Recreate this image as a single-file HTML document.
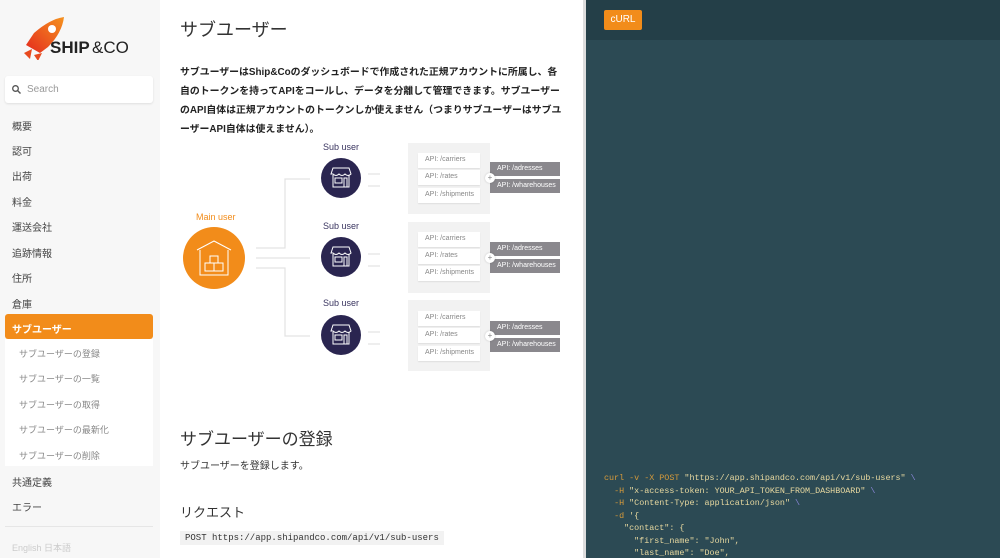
<!DOCTYPE html>
<html><head><meta charset="utf-8"><style>
*{margin:0;padding:0;box-sizing:border-box}
body{width:1000px;height:558px;overflow:hidden;font-family:"Liberation Sans","Noto Sans CJK JP",sans-serif;background:#fff;position:relative}
.side{position:absolute;left:0;top:0;width:160px;height:558px;background:#f7f7f7}
.search{position:absolute;left:5px;top:76px;width:148px;height:27px;background:#fff;border-radius:3px;box-shadow:0 1px 2px rgba(0,0,0,.1);font-size:10px;color:#999;padding:8px 0 0 22px}
.nav{position:absolute;left:12px;font-size:10px;color:#444}
.act{position:absolute;left:5px;top:314px;width:148px;height:25px;background:#f28c1a;border-radius:3px;color:#fff;font-weight:bold;font-size:10px;padding:7px 7px}
.subs{position:absolute;left:5px;top:339px;width:148px;height:127px;background:#fff}
.subs div{position:absolute;left:14px;font-size:9px;color:#888}
.main{position:absolute;left:180px}
.right{position:absolute;left:583px;top:0;width:417px;height:558px;background:#2c4a54;border-left:3px solid #ddd}
.rtop{position:absolute;left:0;top:0;width:417px;height:40px;background:#243f48}
.curl{position:absolute;left:18px;top:10px;width:38px;height:20px;background:#f28c1a;border-radius:2px;color:#fff;font-size:10px;text-align:center;line-height:20px}
pre{position:absolute;left:18px;top:472px;font-family:"Liberation Mono",monospace;font-size:8.4px;line-height:12.5px;color:#e8d9a0}
.o{color:#d69a3a}.b{color:#8a86d8}
.gb{position:absolute;left:408px;width:82px;height:71px;background:#f2f2f2}
.api{position:absolute;left:418px;width:62px;height:15px;background:#fff;font-size:7px;color:#888;padding:3px 0 0 7px;box-shadow:0 1px 1px rgba(0,0,0,.08)}
.dk{position:absolute;left:490px;width:70px;height:14px;background:#8a888d;font-size:7px;color:#fff;padding:3px 0 0 7px}
.pl{position:absolute;left:485px;width:10px;height:10px;border-radius:50%;background:#fff;font-size:8px;color:#888;text-align:center;line-height:10px;box-shadow:0 0 2px rgba(0,0,0,.2)}
.su{position:absolute;left:321px;width:40px;height:40px;border-radius:50%;background:#2a2550}
.sl{position:absolute;left:323px;font-size:9px;color:#3a3560}
</style></head><body>
<div class="side">
<svg style="position:absolute;left:20px;top:15px" width="120" height="45" viewBox="0 0 120 45">
<defs><linearGradient id="g" x1="0" y1="1" x2="1" y2="0"><stop offset="0" stop-color="#e42a1e"/><stop offset="1" stop-color="#f5921e"/></linearGradient></defs>
<path d="M6 30 L14 18 Q30 4 44 2 Q42 18 28 32 L20 38 Z" fill="url(#g)"/>
<circle cx="32" cy="14" r="4" fill="#fff"/>
<path d="M4 38 L12 34 L10 44 Z M14 40 L22 38 L18 46Z" fill="#e84a1e"/>
<text x="30" y="38" font-family="Liberation Sans" font-weight="bold" font-size="17" fill="#222">SHIP</text>
<text x="72" y="38" font-family="Liberation Sans" font-size="17" fill="#222">&amp;CO</text>
</svg>
<div class="search"><svg style="position:absolute;left:7px;top:9px" width="9" height="9"><circle cx="3.5" cy="3.5" r="2.8" fill="none" stroke="#555" stroke-width="1.3"/><path d="M5.5 5.5L8.5 8.5" stroke="#555" stroke-width="1.4"/></svg>Search</div>
<div class="nav" style="top:118px">概要</div>
<div class="nav" style="top:143px">認可</div>
<div class="nav" style="top:168px">出荷</div>
<div class="nav" style="top:194px">料金</div>
<div class="nav" style="top:219px">運送会社</div>
<div class="nav" style="top:245px">追跡情報</div>
<div class="nav" style="top:270px">住所</div>
<div class="nav" style="top:296px">倉庫</div>
<div class="act">サブユーザー</div>
<div class="subs">
<div style="top:8px">サブユーザーの登録</div>
<div style="top:33px">サブユーザーの一覧</div>
<div style="top:59px">サブユーザーの取得</div>
<div style="top:84px">サブユーザーの最新化</div>
<div style="top:110px">サブユーザーの削除</div>
</div>
<div class="nav" style="top:474px">共通定義</div>
<div class="nav" style="top:499px">エラー</div>
<div style="position:absolute;left:5px;top:526px;width:148px;border-top:1px solid #e6e6e6"></div>
<div class="nav" style="top:541px;color:#ccc;font-size:9px">English 日本語</div>
</div>

<div class="main" style="top:16px;font-size:18px;color:#333">サブユーザー</div>
<div class="main" style="top:63px;width:386px;font-size:9.9px;line-height:19px;font-weight:bold;color:#222">サブユーザーはShip&amp;Coのダッシュボードで作成された正規アカウントに所属し、各自のトークンを持ってAPIをコールし、データを分離して管理できます。サブユーザーのAPI自体は正規アカウントのトークンしか使えません（つまりサブユーザーはサブユーザーAPI自体は使えません）。</div>

<div style="position:absolute;left:196px;top:212px;font-size:9px;color:#f28c1a">Main user</div>
<div style="position:absolute;left:183px;top:227px;width:62px;height:62px;border-radius:50%;background:#f28c1a"></div>
<svg style="position:absolute;left:195px;top:238px" width="38" height="40" fill="none" stroke="#fff" stroke-width="1"><path d="M2 12 L19 3 L36 12 M5 12 V37 H33 V12"/><rect x="15" y="18" width="8" height="7"/><rect x="10" y="25" width="9" height="8"/><rect x="19" y="25" width="9" height="8"/></svg>
<svg style="position:absolute;left:250px;top:170px" width="160" height="180" fill="none" stroke="#e3e3e3" stroke-width="1.2">
<path d="M6 78 H35 V9 H60 M6 88 H60 M6 98 H35 V166 H60 M118 4 H130 M118 16 H130 M118 84 H130 M118 96 H130 M118 162 H130 M118 174 H130"/>
</svg>
<div class="sl" style="top:142px">Sub user</div>
<div class="sl" style="top:221px">Sub user</div>
<div class="sl" style="top:298px">Sub user</div>
<div class="su" style="top:158px"></div><div class="su" style="top:237px"></div><div class="su" style="top:315px"></div>
<svg style="position:absolute;left:329px;top:166px" width="24" height="24" fill="none" stroke="#fff" stroke-width="1"><path d="M2 8 L4 2 H20 L22 8 Q19 11 16 8 Q13 11 10 8 Q7 11 4 8 Z M4 9 V21 H20 V9"/><rect x="6" y="12" width="7" height="5"/><rect x="15" y="12" width="3" height="9"/></svg>
<svg style="position:absolute;left:329px;top:245px" width="24" height="24" fill="none" stroke="#fff" stroke-width="1"><path d="M2 8 L4 2 H20 L22 8 Q19 11 16 8 Q13 11 10 8 Q7 11 4 8 Z M4 9 V21 H20 V9"/><rect x="6" y="12" width="7" height="5"/><rect x="15" y="12" width="3" height="9"/></svg>
<svg style="position:absolute;left:329px;top:323px" width="24" height="24" fill="none" stroke="#fff" stroke-width="1"><path d="M2 8 L4 2 H20 L22 8 Q19 11 16 8 Q13 11 10 8 Q7 11 4 8 Z M4 9 V21 H20 V9"/><rect x="6" y="12" width="7" height="5"/><rect x="15" y="12" width="3" height="9"/></svg>

<div class="gb" style="top:143px"></div><div class="gb" style="top:222px"></div><div class="gb" style="top:300px"></div>
<div class="api" style="top:153px">API: /carriers</div><div class="api" style="top:170px">API: /rates</div><div class="api" style="top:188px">API: /shipments</div>
<div class="api" style="top:232px">API: /carriers</div><div class="api" style="top:249px">API: /rates</div><div class="api" style="top:266px">API: /shipments</div>
<div class="api" style="top:311px">API: /carriers</div><div class="api" style="top:328px">API: /rates</div><div class="api" style="top:346px">API: /shipments</div>
<div class="dk" style="top:162px">API: /adresses</div><div class="dk" style="top:179px">API: /wharehouses</div>
<div class="dk" style="top:242px">API: /adresses</div><div class="dk" style="top:259px">API: /wharehouses</div>
<div class="dk" style="top:321px">API: /adresses</div><div class="dk" style="top:338px">API: /wharehouses</div>
<div class="pl" style="top:173px">+</div><div class="pl" style="top:253px">+</div><div class="pl" style="top:331px">+</div>

<div class="main" style="top:425px;font-size:17px;color:#333">サブユーザーの登録</div>
<div class="main" style="top:457px;font-size:10px;color:#333">サブユーザーを登録します。</div>
<div class="main" style="top:502px;font-size:13px;color:#333">リクエスト</div>
<div class="main" style="top:531px;background:#f2f2f2;padding:2px 5px;font-family:'Liberation Mono',monospace;font-size:9px;color:#333">POST https://app.shipandco.com/api/v1/sub-users</div>

<div class="right">
<div class="rtop"><div class="curl">cURL</div></div>
<pre><span class="o">curl -v -X POST</span> "https://app.shipandco.com/api/v1/sub-users" <span class="b">\</span>
  <span class="o">-H</span> "x-access-token: YOUR_API_TOKEN_FROM_DASHBOARD" <span class="b">\</span>
  <span class="o">-H</span> "Content-Type: application/json" <span class="b">\</span>
  <span class="o">-d</span> '{
    "contact": {
      "first_name": "John",
      "last_name": "Doe",</pre>
</div>
</body></html>
